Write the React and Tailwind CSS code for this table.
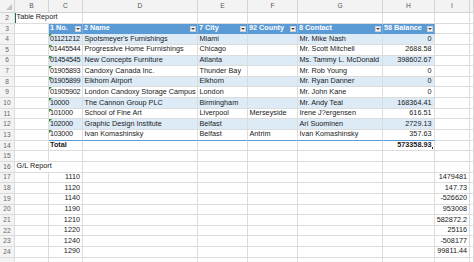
import React from "react";

const W = [
  "w-[15px]",
  "w-[34px]",
  "w-[34px]",
  "w-[115px]",
  "w-[50px]",
  "w-[50px]",
  "w-[85px]",
  "w-[52px]",
  "w-[35px]",
  "flex-1",
];

const LETTERS = ["", "B", "C", "D", "E", "F", "G", "H", "I", ""];

const DATA = [
  ["01121212", "Spotsmeyer's Furnishings", "Miami", "", "Mr. Mike Nash", "0"],
  ["01445544", "Progressive Home Furnishings", "Chicago", "", "Mr. Scott Mitchell", "2688.58"],
  ["01454545", "New Concepts Furniture", "Atlanta", "", "Ms. Tammy L. McDonald", "398602.67"],
  ["01905893", "Candoxy Canada Inc.", "Thunder Bay", "", "Mr. Rob Young", "0"],
  ["01905899", "Elkhorn Airport", "Elkhorn", "", "Mr. Ryan Danner", "0"],
  ["01905902", "London Candoxy Storage Campus", "London", "", "Mr. John Kane", "0"],
  ["10000", "The Cannon Group PLC", "Birmingham", "", "Mr. Andy Teal", "168364.41"],
  ["101000", "School of Fine Art", "Liverpool", "Merseyside", "Irene J?ergensen", "616.51"],
  ["102000", "Graphic Design Institute", "Belfast", "", "Ari Suominen", "2729.13"],
  ["103000", "Ivan Komashinsky", "Belfast", "Antrim", "Ivan Komashinsky", "357.63"],
];

const GL = [
  ["1110", "1479481"],
  ["1120", "147.73"],
  ["1140", "-526620"],
  ["1190", "953008"],
  ["1210", "582872.2"],
  ["1220", "25116"],
  ["1240", "-508177"],
  ["1290", "99811.44"],
];

const HEADERS = ["1 No.", "2 Name", "7 City", "92 County", "8 Contact", "58 Balance"];

const base =
  "shrink-0 h-full flex items-center whitespace-nowrap border-b border-r border-[#dcdcdc]";

function RowHead({ n }) {
  return (
    <div
      className={`${W[0]} ${base} justify-center bg-[#f3f3f3] text-[#666666] text-[6.6px] border-[#d4d4d4]`}
    >
      {n}
    </div>
  );
}

function Row({ children, className = "" }) {
  return <div className={`flex h-[10.65px] ${className}`}>{children}</div>;
}

function Blank({ i, extra = "" }) {
  return <div className={`${W[i]} ${base} ${extra}`} />;
}

function Filter() {
  return (
    <div className="absolute right-[1px] top-[2px] w-[6px] h-[6px] bg-[#f7f7f7] border border-[#d0d0d0] flex items-center justify-center">
      <div className="w-0 h-0 border-l-[2px] border-r-[2px] border-t-[2px] border-l-transparent border-r-transparent border-t-[#444444]" />
    </div>
  );
}

function GreenTri() {
  return (
    <div className="absolute left-0 top-0 w-0 h-0 border-t-[3px] border-r-[3px] border-t-[#2e8b3e] border-r-transparent" />
  );
}

export default function App() {
  return (
    <div className="w-[474px] h-[262px] overflow-hidden bg-white text-[#1a1a1a] font-['Liberation_Sans',Arial,sans-serif] text-[7.25px]">
      {/* column letters */}
      <div className="flex h-[13px]">
        {LETTERS.map((l, i) => (
          <div
            key={i}
            className={`${W[i]} shrink-0 h-full flex items-center justify-center bg-[#f3f3f3] text-[#555555] text-[6.6px] border-b border-r border-[#d4d4d4] relative`}
          >
            {i === 0 ? (
              <div className="absolute right-[2px] bottom-[2px] w-0 h-0 border-b-[6px] border-l-[6px] border-b-[#c4c4c4] border-l-transparent" />
            ) : (
              l
            )}
          </div>
        ))}
      </div>

      {/* row 2 */}
      <Row>
        <RowHead n={2} />
        <div className={`${W[1]} ${base} border-r-0 pl-[1.5px] relative`}>
          <div className="absolute left-0 top-0 bottom-0 w-[1px] bg-[#217346]" />
          Table Report
        </div>
        {[2, 3, 4, 5, 6, 7, 8, 9].map((i) => (
          <Blank key={i} i={i} />
        ))}
      </Row>

      {/* row 3 header */}
      <Row>
        <RowHead n={3} />
        <Blank i={1} />
        {HEADERS.map((h, k) => (
          <div
            key={k}
            className={`${W[k + 2]} ${base} relative bg-[#5b9bd5] border-r-[#7fb0df] border-b-[#5b9bd5] text-white font-bold pl-[1px]`}
          >
            {h}
            <Filter />
          </div>
        ))}
        <Blank i={8} />
        <Blank i={9} />
      </Row>

      {/* data rows */}
      {DATA.map((r, k) => {
        const n = k + 4;
        const band = n % 2 === 0;
        const bg = band ? "bg-[#ddebf7] border-[#d3dde8]" : "bg-white";
        const last = n === 13 ? "border-b-[#5b9bd5]" : "";
        return (
          <Row key={n}>
            <RowHead n={n} />
            <Blank i={1} />
            <div className={`${W[2]} ${base} ${bg} ${last} relative pl-[1px] tracking-[-0.25px]`}>
              <GreenTri />
              {r[0]}
            </div>
            {[1, 2, 3, 4].map((j) => (
              <div key={j} className={`${W[j + 2]} ${base} ${bg} ${last} pl-[1.5px]`}>
                {r[j]}
              </div>
            ))}
            <div className={`${W[7]} ${base} ${bg} ${last} justify-end pr-[2.5px]`}>{r[5]}</div>
            <Blank i={8} />
            <Blank i={9} />
          </Row>
        );
      })}

      {/* total row */}
      <Row>
        <RowHead n={14} />
        <Blank i={1} />
        <div className={`${W[2]} ${base} font-bold pl-[1px]`}>Total</div>
        <Blank i={3} />
        <Blank i={4} />
        <Blank i={5} />
        <Blank i={6} />
        <div className={`${W[7]} ${base} font-bold justify-end pr-[2.5px] relative`}>
          573358.93
          <div className="absolute right-[1px] bottom-[1px] w-[1px] h-[2px] bg-[#333333]" />
        </div>
        <Blank i={8} />
        <Blank i={9} />
      </Row>

      {/* row 15 */}
      <Row>
        <RowHead n={15} />
        {[1, 2, 3, 4, 5, 6, 7, 8, 9].map((i) => (
          <Blank key={i} i={i} />
        ))}
      </Row>

      {/* row 16 */}
      <Row>
        <RowHead n={16} />
        <div className={`${W[1]} ${base} border-r-0 pl-[1.5px]`}>G/L Report</div>
        {[2, 3, 4, 5, 6, 7, 8, 9].map((i) => (
          <Blank key={i} i={i} />
        ))}
      </Row>

      {/* G/L rows */}
      {GL.map((g, k) => (
        <Row key={k}>
          <RowHead n={k + 17} />
          <Blank i={1} />
          <div className={`${W[2]} ${base} justify-end pr-[2px]`}>{g[0]}</div>
          {[3, 4, 5, 6, 7].map((i) => (
            <Blank key={i} i={i} />
          ))}
          <div className={`${W[8]} ${base} justify-end pr-[2px]`}>{g[1]}</div>
          <Blank i={9} />
        </Row>
      ))}

      {/* row 25 (partially visible) */}
      <Row>
        <RowHead n="" />
        {[1, 2, 3, 4, 5, 6, 7, 8, 9].map((i) => (
          <Blank key={i} i={i} />
        ))}
      </Row>
    </div>
  );
}
